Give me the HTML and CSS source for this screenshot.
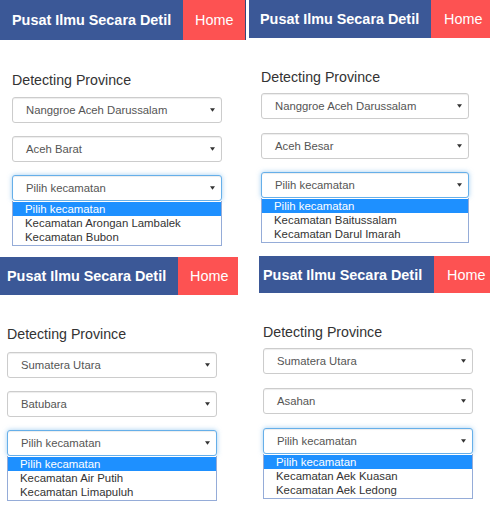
FILE: index.html
```html
<!DOCTYPE html>
<html lang="id">
<head>
<meta charset="utf-8">
<title>Detecting Province</title>
<link rel="stylesheet" href="styles.css">
</head>
<body>
<main class="collage">

  <section class="shot shot-1">
    <header class="navbar">
      <span class="brand">Pusat Ilmu Secara Detil</span>
      <span class="nav-home">Home</span>
    </header>
    <div class="form">
      <h2 class="label">Detecting Province</h2>
      <div class="select"><span class="select-text">Nanggroe Aceh Darussalam</span><svg class="caret" viewBox="0 0 6 4"><polygon points="0,0 6,0 3,4"/></svg></div>
      <div class="select"><span class="select-text">Aceh Barat</span><svg class="caret" viewBox="0 0 6 4"><polygon points="0,0 6,0 3,4"/></svg></div>
      <div class="dropdown">
        <div class="select is-focused"><span class="select-text">Pilih kecamatan</span><svg class="caret" viewBox="0 0 6 4"><polygon points="0,0 6,0 3,4"/></svg></div>
        <ul class="options">
          <li class="option is-active">Pilih kecamatan</li>
          <li class="option">Kecamatan Arongan Lambalek</li>
          <li class="option">Kecamatan Bubon</li>
        </ul>
      </div>
    </div>
  </section>

  <section class="shot shot-2">
    <header class="navbar">
      <span class="brand">Pusat Ilmu Secara Detil</span>
      <span class="nav-home">Home</span>
    </header>
    <div class="form">
      <h2 class="label">Detecting Province</h2>
      <div class="select"><span class="select-text">Nanggroe Aceh Darussalam</span><svg class="caret" viewBox="0 0 6 4"><polygon points="0,0 6,0 3,4"/></svg></div>
      <div class="select"><span class="select-text">Aceh Besar</span><svg class="caret" viewBox="0 0 6 4"><polygon points="0,0 6,0 3,4"/></svg></div>
      <div class="dropdown">
        <div class="select is-focused"><span class="select-text">Pilih kecamatan</span><svg class="caret" viewBox="0 0 6 4"><polygon points="0,0 6,0 3,4"/></svg></div>
        <ul class="options">
          <li class="option is-active">Pilih kecamatan</li>
          <li class="option">Kecamatan Baitussalam</li>
          <li class="option">Kecamatan Darul Imarah</li>
        </ul>
      </div>
    </div>
  </section>

  <section class="shot shot-3">
    <header class="navbar">
      <span class="brand">Pusat Ilmu Secara Detil</span>
      <span class="nav-home">Home</span>
    </header>
    <div class="form">
      <h2 class="label">Detecting Province</h2>
      <div class="select"><span class="select-text">Sumatera Utara</span><svg class="caret" viewBox="0 0 6 4"><polygon points="0,0 6,0 3,4"/></svg></div>
      <div class="select"><span class="select-text">Batubara</span><svg class="caret" viewBox="0 0 6 4"><polygon points="0,0 6,0 3,4"/></svg></div>
      <div class="dropdown">
        <div class="select is-focused"><span class="select-text">Pilih kecamatan</span><svg class="caret" viewBox="0 0 6 4"><polygon points="0,0 6,0 3,4"/></svg></div>
        <ul class="options">
          <li class="option is-active">Pilih kecamatan</li>
          <li class="option">Kecamatan Air Putih</li>
          <li class="option">Kecamatan Limapuluh</li>
        </ul>
      </div>
    </div>
  </section>

  <section class="shot shot-4">
    <header class="navbar">
      <span class="brand">Pusat Ilmu Secara Detil</span>
      <span class="nav-home">Home</span>
    </header>
    <div class="form">
      <h2 class="label">Detecting Province</h2>
      <div class="select"><span class="select-text">Sumatera Utara</span><svg class="caret" viewBox="0 0 6 4"><polygon points="0,0 6,0 3,4"/></svg></div>
      <div class="select"><span class="select-text">Asahan</span><svg class="caret" viewBox="0 0 6 4"><polygon points="0,0 6,0 3,4"/></svg></div>
      <div class="dropdown">
        <div class="select is-focused"><span class="select-text">Pilih kecamatan</span><svg class="caret" viewBox="0 0 6 4"><polygon points="0,0 6,0 3,4"/></svg></div>
        <ul class="options">
          <li class="option is-active">Pilih kecamatan</li>
          <li class="option">Kecamatan Aek Kuasan</li>
          <li class="option">Kecamatan Aek Ledong</li>
        </ul>
      </div>
    </div>
  </section>

</main>
</body>
</html>
```

FILE: styles.css
```css
* { box-sizing: border-box; }

html, body {
  margin: 0;
  padding: 0;
  background: #ffffff;
}

body {
  font-family: "Liberation Sans", Arial, sans-serif;
  color: #333333;
  width: 490px;
  height: 507px;
  overflow: hidden;
}

.collage {
  display: grid;
  grid-template-columns: 246px 244px;
  grid-template-rows: 256px 251px;
  width: 490px;
  height: 507px;
}

.shot {
  overflow: hidden;
  --nav-h: 40px;
  --nav-x: 0px;
  --brand-w: 183px;
  --brand-pad: 12px;
  --home-w: 62px;
  --home-pad: 12px;
  --content-x: 12px;
  --label-top: 32px;
  --sel-top: 9px;
  --sel-w: 210px;
  --sel-gap: 13px;
}

.shot-1 {
  --nav-h: 40px;
  --brand-w: 183px;
  --brand-pad: 12px;
  --home-w: 62px;
  --home-pad: 12px;
  --content-x: 12px;
  --label-top: 32px;
  --sel-top: 9px;
  --sel-w: 210px;
  --sel-gap: 13px;
}

.shot-1 .navbar {
  border-right: 1px solid #34457a;
  width: 246px;
}

.shot-2 {
  --nav-h: 38px;
  --nav-x: 3px;
  --brand-w: 182px;
  --brand-pad: 11px;
  --home-w: 59px;
  --home-pad: 13px;
  --content-x: 15px;
  --label-top: 31px;
  --sel-top: 8px;
  --sel-w: 208px;
  --sel-gap: 13.5px;
}

.shot-3 {
  margin-top: 1px;
  --nav-h: 38px;
  --nav-x: 0px;
  --brand-w: 178px;
  --brand-pad: 7px;
  --home-w: 60px;
  --home-pad: 12px;
  --content-x: 7px;
  --label-top: 31px;
  --sel-top: 10px;
  --sel-w: 210px;
  --sel-gap: 13px;
}

.shot-4 {
  --nav-h: 37px;
  --nav-x: 13px;
  --brand-w: 175px;
  --brand-pad: 4px;
  --home-w: 56px;
  --home-pad: 13px;
  --content-x: 17px;
  --label-top: 31px;
  --sel-top: 8px;
  --sel-w: 210px;
  --sel-gap: 14px;
}

/* navbar */
.navbar {
  display: flex;
  height: var(--nav-h);
  margin-left: var(--nav-x);
  font-size: 14.4px;
  color: #ffffff;
}

.brand {
  display: flex;
  align-items: center;
  width: var(--brand-w);
  padding-left: var(--brand-pad);
  background: #3b5897;
  font-weight: bold;
  white-space: nowrap;
}

.nav-home {
  display: flex;
  align-items: center;
  width: var(--home-w);
  padding-left: var(--home-pad);
  background: #fd5252;
  white-space: nowrap;
}

/* form */
.form {
  display: flex;
  flex-direction: column;
  gap: var(--sel-gap);
  padding-left: var(--content-x);
  width: calc(var(--content-x) + var(--sel-w));
}

.label {
  margin: var(--label-top) 0 calc(var(--sel-top) - var(--sel-gap)) 0;
  font-size: 14.2px;
  font-weight: normal;
  line-height: 16px;
  color: #333333;
  white-space: nowrap;
}

.select {
  display: flex;
  align-items: center;
  justify-content: space-between;
  height: 26px;
  padding: 0 6px 0 13px;
  border: 1px solid #cccccc;
  border-radius: 3px;
  background: #ffffff;
  box-shadow: inset 0 1px 1px rgba(0, 0, 0, 0.075);
  font-size: 11.3px;
  color: #555555;
}

.select-text {
  white-space: nowrap;
}

.caret {
  width: 5px;
  height: 4px;
  fill: #333333;
  flex: none;
}

.select.is-focused {
  border-color: #66afe9;
  box-shadow: inset 0 1px 1px rgba(0, 0, 0, 0.075), 0 0 5px rgba(102, 175, 233, 0.6);
}

.dropdown {
  display: flex;
  flex-direction: column;
}

.options {
  list-style: none;
  margin: 0;
  padding: 1px 0 1px 0;
  border: 1px solid #95acd8;
  border-top: none;
  background: #ffffff;
}

.option {
  height: 14px;
  line-height: 14px;
  padding-left: 12px;
  font-size: 11.4px;
  color: #333333;
  white-space: nowrap;
}

.option.is-active {
  background: #1e90ff;
  color: #ffffff;
}
```
